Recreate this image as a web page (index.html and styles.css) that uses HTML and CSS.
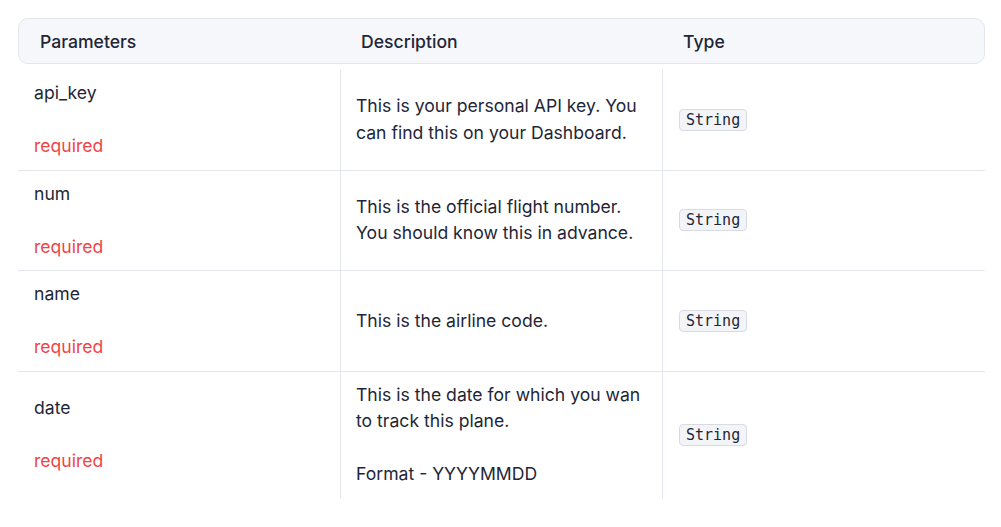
FILE: index.html
```html
<!DOCTYPE html>
<html>
<head>
<meta charset="utf-8">
<link rel="stylesheet" href="styles.css">
</head>
<body>
<div class="params">
  <div class="head">
    <div class="hcell">Parameters</div>
    <div class="hcell">Description</div>
    <div class="hcell">Type</div>
  </div>
  <div class="rows">
    <div class="row">
      <div class="cell name">api_key<br><br><span class="req">required</span></div>
      <div class="cell desc">This is your personal API key. You can find this on your Dashboard.</div>
      <div class="cell type"><code class="badge">String</code></div>
    </div>
    <div class="row">
      <div class="cell name">num<br><br><span class="req">required</span></div>
      <div class="cell desc">This is the official flight number. You should know this in advance.</div>
      <div class="cell type"><code class="badge">String</code></div>
    </div>
    <div class="row">
      <div class="cell name">name<br><br><span class="req">required</span></div>
      <div class="cell desc">This is the airline code.</div>
      <div class="cell type"><code class="badge">String</code></div>
    </div>
    <div class="row">
      <div class="cell name">date<br><br><span class="req">required</span></div>
      <div class="cell desc">This is the date for which you wan to track this plane.<br><br>Format - YYYYMMDD</div>
      <div class="cell type"><code class="badge">String</code></div>
    </div>
  </div>
</div>
</body>
</html>
```
FILE: styles.css
```css
* { box-sizing: border-box; }
body {
  margin: 0;
  padding: 18px 0 0 18px;
  background: #ffffff;
  font-family: Inter, "Noto Sans", sans-serif;
  font-size: 17.6px;
  color: #1e2637;
}
.params { width: 967px; }
.head {
  display: grid;
  grid-template-columns: 321px 322px 1fr;
  height: 46px;
  align-items: center;
  background: #f6f7fa;
  border: 1px solid #e3e6ed;
  border-radius: 10px;
  font-weight: 500;
}
.hcell { padding-left: 21px; }
.rows { margin-top: 6px; }
.row {
  display: grid;
  grid-template-columns: 323px 322px 1fr;
  border-bottom: 1px solid #e3e6ed;
}
.row:last-child { border-bottom: none; }
.cell {
  padding: 10px 16px;
  line-height: 26.5px;
  display: flex;
  flex-direction: column;
  justify-content: center;
}
.name, .desc { border-right: 1px solid #e3e6ed; }
.desc { padding-left: 15px; }
.req { color: #ef4444; }
.type { align-items: flex-start; padding-left: 16px; }
.badge {
  font-family: "DejaVu Sans Mono", monospace;
  font-size: 15px;
  line-height: 20px;
  padding: 0 6px;
  background: #f3f4f8;
  border: 1px solid #d8dbe3;
  border-radius: 4px;
  color: #1e2637;
}
```
